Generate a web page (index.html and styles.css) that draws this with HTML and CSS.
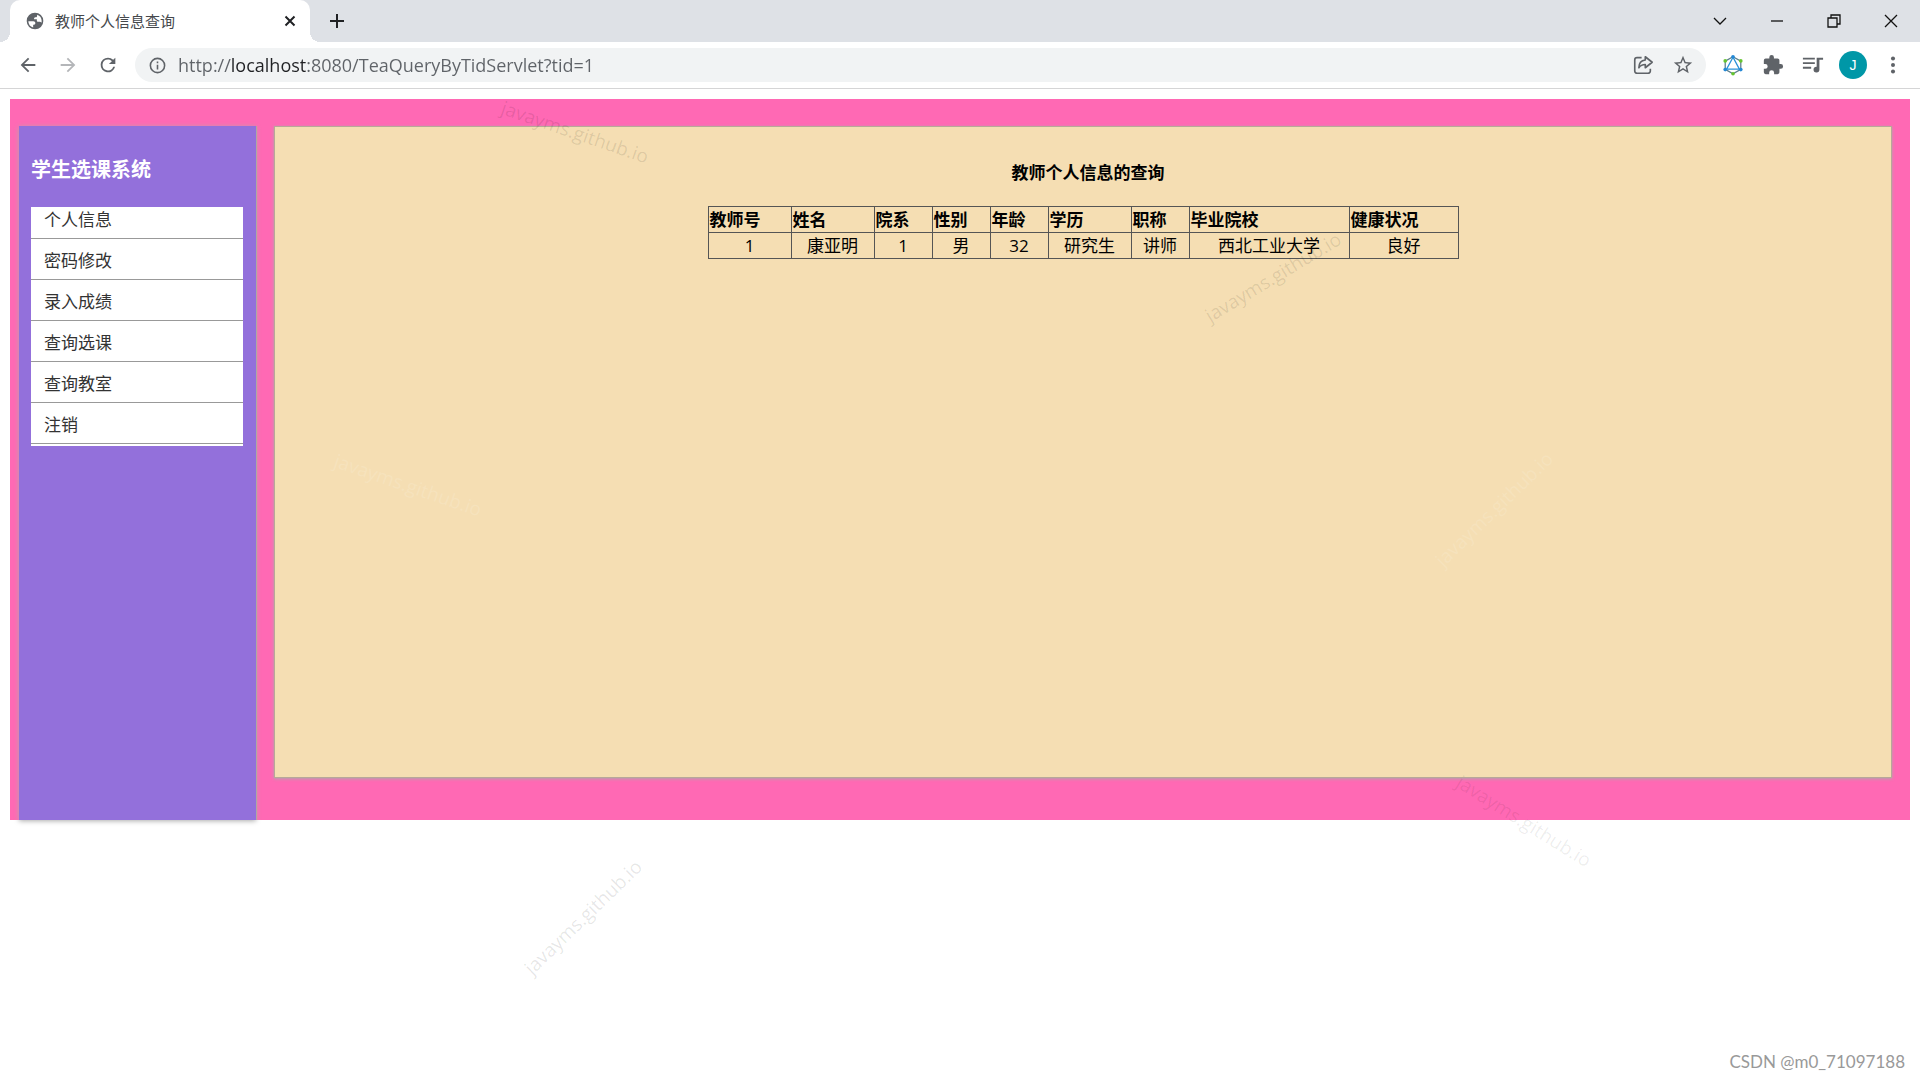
FILE: index.html
```html
<!DOCTYPE html>
<html lang="zh-CN">
	<head>
		<meta charset="utf-8">
		<title>教师个人信息查询</title>
		<link rel="stylesheet" href="styles.css">
	</head>
	<body>
	<!-- 标签栏 -->
	<div class="tabbar">
		<div class="tab">
			<svg class="globe" viewBox="0 0 24 24"><path fill="#5f6368" d="M12 2a10 10 0 1 0 0 20 10 10 0 0 0 0-20z"/><path fill="#fff" d="M4 12.2l6 .2c1.500 0 2.400 1 2.400 2.200 0 1.500-1.300 1.900-2.600 1.900v3.200A8 8 0 0 1 4 12.200zM14.500 4.400A8 8 0 0 1 20 12c0 .8-.1 1.500-.3 2.200-.5-.9-1.400-1.300-2.500-1.300h-1.500c-1 0-1.500-.7-1.500-1.600V9.800h-3.400c0-1.700.8-2.300 2-2.300 1.200 0 1.700-.7 1.700-1.600z"/></svg>
			<span class="tab_name">教师个人信息查询</span>
			<button class="btn tab_close" aria-label="关闭标签页"><svg viewBox="0 0 12 12"><path d="M1.500 1.500l9 9M10.500 1.500l-9 9"/></svg></button>
		</div>
		<button class="btn tab_add" aria-label="新标签页"><svg viewBox="0 0 16 16"><path d="M8 1v14M1 8h14"/></svg></button>
		<div class="win">
			<button class="btn" aria-label="搜索标签页"><svg viewBox="0 0 16 16"><path d="M2 5l6 6 6-6"/></svg></button>
			<button class="btn" aria-label="最小化"><svg viewBox="0 0 16 16"><path d="M2 8h12"/></svg></button>
			<button class="btn" aria-label="还原"><svg viewBox="0 0 16 16"><path d="M2 5h9v9H2zM5 5V2h9v9h-3"/></svg></button>
			<button class="btn" aria-label="关闭"><svg viewBox="0 0 16 16"><path d="M2 2l12 12M14 2L2 14"/></svg></button>
		</div>
	</div>
	<!-- 地址栏 -->
	<div class="toolbar">
		<div class="nav">
			<button class="btn" aria-label="后退"><svg viewBox="0 0 24 24"><path d="M20 11H7.830l5.590-5.590L12 4l-8 8 8 8 1.410-1.410L7.830 13H20v-2z"/></svg></button>
			<button class="btn off" aria-label="前进" disabled><svg viewBox="0 0 24 24"><path d="M12 4l-1.410 1.410L16.170 11H4v2h12.170l-5.580 5.590L12 20l8-8z"/></svg></button>
			<button class="btn" aria-label="刷新"><svg viewBox="0 0 24 24"><path d="M17.650 6.350A7.958 7.958 0 0 0 12 4a8 8 0 1 0 7.730 10h-2.080A6 6 0 1 1 12 6c1.660 0 3.140.69 4.220 1.780L13 11h7V4l-2.350 2.350z"/></svg></button>
		</div>
		<div class="omnibox">
			<svg class="info" viewBox="0 0 24 24"><path d="M11 7h2v2h-2zm0 4h2v6h-2zm1-9a10 10 0 1 0 0 20 10 10 0 0 0 0-20zm0 18a8 8 0 1 1 0-16 8 8 0 0 1 0 16z"/></svg>
			<input class="url" type="text" aria-label="地址" value="http://localhost:8080/TeaQueryByTidServlet?tid=1">
			<button class="btn" aria-label="分享"><svg viewBox="0 0 24 24"><path fill="none" stroke="#5f6368" stroke-width="1.800" stroke-linejoin="round" d="M10.500 4H5.500a2.500 2.500 0 0 0-2.500 2.500v12A2.500 2.500 0 0 0 5.500 21h12a2.500 2.500 0 0 0 2.500-2.500V16M14.500 3l7.500 6-7.500 6v-3.500c-3.500 0-5.500 1.200-7 3.500 0-5 2.500-8 7-8.500z"/></svg></button>
			<button class="btn" aria-label="收藏"><svg viewBox="0 0 24 24"><path d="M22 9.240l-7.190-.62L12 2 9.190 8.630 2 9.240l5.460 4.730L5.820 21 12 17.270 18.180 21l-1.630-7.030L22 9.240zM12 15.400l-3.760 2.270 1-4.280-3.320-2.880 4.380-.38L12 6.100l1.710 4.040 4.380.38-3.320 2.880 1 4.280L12 15.400z"/></svg></button>
		</div>
		<div class="tools">
			<button class="btn" aria-label="GraphQL"><svg viewBox="0 0 24 24"><path fill="none" stroke="#5d7f8c" stroke-width="1.400" d="M12 3l8.500 4.800v9L12 21.500l-8.500-4.700v-9z"/><path fill="none" stroke="#2a93d8" stroke-width="1.400" d="M12 3.500L5 16.500h14z"/><g fill="#2388d6"><circle cx="12" cy="3" r="2"/><circle cx="3.500" cy="17" r="2"/><circle cx="20.500" cy="17" r="2"/></g><g fill="#66c430"><circle cx="3.500" cy="7.500" r="2"/><circle cx="20.500" cy="7.500" r="2"/><circle cx="12" cy="21.500" r="2"/></g></svg></button>
			<button class="btn" aria-label="扩展程序"><svg viewBox="0 0 24 24"><path d="M20.500 11H19V7a2 2 0 0 0-2-2h-4V3.500a2.500 2.500 0 0 0-5 0V5H4a2 2 0 0 0-1.990 2v3.800H3.500a2.700 2.700 0 0 1 0 5.400H2V20a2 2 0 0 0 2 2h3.800v-1.500a2.700 2.700 0 0 1 5.400 0V22H17a2 2 0 0 0 2-2v-4h1.500a2.500 2.500 0 0 0 0-5z"/></svg></button>
			<button class="btn" aria-label="媒体"><svg viewBox="0 0 24 24"><path d="M1 4h13v2H1zM1 9h13v2H1zM1 14h9v2H1zM16 4h7v2.200h-4v10.800a3.200 3.200 0 1 1-3-3.200z"/></svg></button>
			<button class="btn avatar" aria-label="用户">J</button>
			<button class="btn" aria-label="菜单"><svg viewBox="0 0 24 24"><circle cx="12" cy="5" r="2.200"/><circle cx="12" cy="12" r="2.200"/><circle cx="12" cy="19" r="2.200"/></svg></button>
		</div>
	</div>
	<!-- 页面 -->
	<div class="main">
		<div class="left">
			<h3>学生选课系统</h3>
			<ul class="menu">
				<li><a href="#">个人信息</a></li>
				<li><a href="#">密码修改</a></li>
				<li><a href="#">录入成绩</a></li>
				<li><a href="#">查询选课</a></li>
				<li><a href="#">查询教室</a></li>
				<li><a href="#">注销</a></li>
			</ul>
		</div>
		<div class="right">
			<h4>教师个人信息的查询</h4>
			<table class="info_table">
				<colgroup>
					<col class="w2"><col class="w2"><col class="w1"><col class="w1"><col class="w1"><col class="w2"><col class="w1"><col class="w4"><col class="w3">
				</colgroup>
				<tr>
					<th>教师号</th>
					<th>姓名</th>
					<th>院系</th>
					<th>性别</th>
					<th>年龄</th>
					<th>学历</th>
					<th>职称</th>
					<th>毕业院校</th>
					<th>健康状况</th>
				</tr>
				<tr>
					<td>1</td>
					<td>康亚明</td>
					<td>1</td>
					<td>男</td>
					<td>32</td>
					<td>研究生</td>
					<td>讲师</td>
					<td>西北工业大学</td>
					<td>良好</td>
				</tr>
			</table>
		</div>
	</div>
	<!-- 水印 -->
	<span class="mark m1">javayms.github.io</span>
	<span class="mark m2">javayms.github.io</span>
	<span class="mark light m3">javayms.github.io</span>
	<span class="mark light m4">javayms.github.io</span>
	<span class="mark m5">javayms.github.io</span>
	<span class="mark m6">javayms.github.io</span>
	<div class="csdn">CSDN @m0_71097188</div>
	</body>
</html>
```
FILE: styles.css
```css
*{ margin: 0; padding: 0; box-sizing: border-box; text-decoration: none; list-style-type: none; }
html{ height: 100%; }
body{ position: relative; min-height: 100%; overflow: hidden; background-color: #fff; font-family: "Open Sans","Noto Sans CJK SC",sans-serif; font-size: 17px; }
.btn{ display: flex; align-items: center; justify-content: center; border: none; background: none; flex-shrink: 0; }
svg{ display: block; flex-shrink: 0; }
/*标签栏*/
.tabbar{ display: flex; align-items: center; height: 42px; padding-left: 10px; background-color: #dee1e6; }
.tab{ position: relative; display: flex; align-items: center; width: 300px; height: 42px; padding: 0 14px 0 15px; background-color: #fff; border-radius: 10px 10px 0 0; }
.tab::before,.tab::after{ content: ""; position: absolute; bottom: 0; width: 10px; height: 10px; }
.tab::before{ left: -10px; background: radial-gradient(circle at 0 0,transparent 10px,#fff 10px); }
.tab::after{ right: -10px; background: radial-gradient(circle at 100% 0,transparent 10px,#fff 10px); }
.globe{ width: 20px; height: 20px; }
.tab_name{ flex: 1; margin-left: 10px; font-size: 15px; line-height: 20px; color: #45484c; }
.tab_close svg{ width: 12px; height: 12px; stroke: #202124; stroke-width: 2; }
.tab_add{ margin-left: 19px; }
.tab_add svg{ width: 16px; height: 16px; stroke: #202124; stroke-width: 2; }
.win{ display: flex; align-items: center; margin-left: auto; height: 36px; padding-right: 1px; }
.win .btn{ width: 57px; height: 36px; }
.win svg{ width: 16px; height: 16px; fill: none; stroke: #111; stroke-width: 1.3; }
/*地址栏*/
.toolbar{ display: flex; align-items: center; height: 47px; border-bottom: 1px solid #d5d5d6; }
.toolbar svg{ width: 22px; height: 22px; fill: #5f6368; }
.nav{ display: flex; gap: 18px; padding: 0 16px 0 17px; }
.nav .off svg{ fill: #b4b6b9; }
.omnibox{ flex: 1; display: flex; align-items: center; height: 34px; padding: 0 12px 0 13px; background-color: #f1f3f4; border-radius: 17px; }
.omnibox .info{ width: 19px; height: 19px; }
.omnibox .btn{ margin-left: 18px; }
.url{ flex: 1; height: 30px; margin-left: 11px; border: none; outline: none; font-family: "Open Sans",sans-serif; font-size: 18px; color: transparent; background: linear-gradient(to right,#5f6368 54px,#202124 54px,#202124 129px,#5f6368 129px); -webkit-background-clip: text; background-clip: text; }
.tools{ display: flex; align-items: center; gap: 18px; padding: 0 16px; }
.tools .avatar{ width: 28px; height: 28px; margin: 0 -3px; border-radius: 50%; background-color: #0097a7; color: #fff; font-size: 14px; }
/*页面主体*/
.main{ display: flex; align-items: flex-start; gap: 18px; margin: 10px; padding: 27px 18px 0 9px; background-color: hotpink; }
.left{ width: 237px; min-height: 694px; padding: 31px 13px 31px 12px; background-color: mediumpurple; box-shadow: 0 1px 5px #aaa,1px 0 0 #b5a59c; }
.left h3{ font-size: 20px; line-height: 26px; color: #fff; }
.menu{ margin-top: 24px; padding-bottom: 2px; background-color: #fff; }
.menu li{ height: 41px; padding: 9px 13px 0; line-height: 26px; border-bottom: 1px solid #999; }
.menu li:first-child{ height: 32px; padding-top: 0; }
.menu a{ display: block; color: #333; }
.right{ flex: 1; min-width: 0; min-height: 652px; padding-top: 34px; background-color: wheat; border: 1px solid #b8a899; box-shadow: 0 1px 3px #aaa; }
.right h4{ padding-left: 10px; font-size: 17px; line-height: 24px; text-align: center; }
.info_table{ margin: 21px auto 0; border-collapse: collapse; table-layout: fixed; width: 750px; }
.info_table th,.info_table td{ height: 26px; border: 1px solid #555; line-height: 24px; white-space: nowrap; }
.info_table th{ padding-left: 1px; text-align: left; }
.info_table td{ text-align: center; }
.w1{ width: 58px; }
.w2{ width: 83px; }
.w3{ width: 109px; }
.w4{ width: 160px; }
/*水印*/
.mark{ position: absolute; width: 160px; height: 28px; line-height: 28px; text-align: center; font-size: 19px; color: rgba(0,0,0,.1); pointer-events: none; white-space: nowrap; }
.light{ color: rgba(255,255,255,.13); }
.m1{ left: 495px; top: 118px; transform: rotate(19deg); }
.m2{ left: 1193px; top: 263px; transform: rotate(-31deg); }
.m3{ left: 328px; top: 471px; transform: rotate(19deg); }
.m4{ left: 1414px; top: 495px; transform: rotate(-44deg); }
.m5{ left: 503px; top: 903px; transform: rotate(-44deg); }
.m6{ left: 1444px; top: 807px; transform: rotate(32deg); color: rgba(0,0,0,.08); }
.csdn{ position: absolute; right: 15px; bottom: 6px; font-family: Lato,sans-serif; font-size: 17px; line-height: 24px; color: #999; }
```
